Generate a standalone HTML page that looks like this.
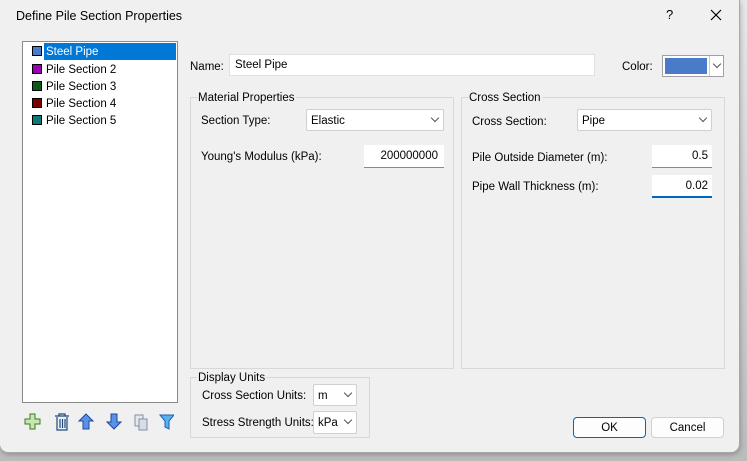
<!DOCTYPE html>
<html><head><meta charset="utf-8"><style>
*{box-sizing:border-box;margin:0;padding:0}
body{width:747px;height:461px;background:linear-gradient(#e8e8e8,#bcbcbc);position:relative;overflow:hidden;font-family:"Liberation Sans",sans-serif;font-size:11.5px;color:#000}
.dlg{position:absolute;left:0;top:0;width:739px;height:452px;background:#f0f0f0;border-radius:0 0 8px 8px;box-shadow:0 0 0 1px #a8a8a8,1px 2px 6px rgba(0,0,0,.3)}
.a{position:absolute}
.t{position:absolute;white-space:nowrap;line-height:16px}
.in{position:absolute;background:#fff;border-bottom:1px solid #8a8a8a}
.cb{position:absolute;background:#fff;border:1px solid #d0d0d0;border-radius:2px}
.cb span{position:absolute;left:4px;top:3px;line-height:16px}
.cb i{position:absolute;right:5px;top:5px;width:6px;height:6px;border-right:1px solid #555;border-bottom:1px solid #555;transform:rotate(45deg)}
.grp{position:absolute;border:1px solid #d8d8d8}
.lg{position:absolute;background:#f0f0f0;padding:0 1px;top:-7px;left:6px;line-height:14px}
.sw{position:absolute;left:9px;width:10px;height:10px;border:1px solid #000}
.btn{position:absolute;background:#fdfdfd;border:1px solid #d0d0d0;border-radius:4px;text-align:center;line-height:20px}
</style></head><body>
<div class="dlg">
<div class="t" style="left:16px;top:8px;font-size:12.5px">Define Pile Section Properties</div>
<div class="t" style="left:666px;top:7px;font-size:13px">?</div>
<svg class="a" style="left:710px;top:9px" width="12" height="12"><path d="M1 1L11 11M11 1L1 11" stroke="#000" stroke-width="1.2"/></svg>

<div class="a" style="left:22px;top:41px;width:156px;height:362px;background:#fff;border:1px solid #8a8a8a">
<div class="a" style="left:21px;top:1px;width:132px;height:17px;background:#0078d7"></div>
<div class="sw" style="top:4px;background:#4a7bc8"></div><div class="t" style="left:23px;top:2px;color:#fff">Steel Pipe</div>
<div class="sw" style="top:22px;background:#9b00b0"></div><div class="t" style="left:23px;top:20px">Pile Section 2</div>
<div class="sw" style="top:39px;background:#0b5a1a"></div><div class="t" style="left:23px;top:37px">Pile Section 3</div>
<div class="sw" style="top:56px;background:#7a0000"></div><div class="t" style="left:23px;top:54px">Pile Section 4</div>
<div class="sw" style="top:73px;background:#0b7a75"></div><div class="t" style="left:23px;top:71px">Pile Section 5</div>
</div>

<svg class="a" style="left:24px;top:413px" width="150" height="18">
<path d="M6 1h5v5h5v5h-5v5H6v-5H1V6h5z" fill="#c8e6b0" stroke="#3a7a20"/>
<path d="M31 3h14M35 3V1h6v2M33 4v13h10V4M36 6v9M38.5 6v9M41 6v9" fill="none" stroke="#1a4a80" stroke-width="1.2"/>
<path d="M62 1l7 7h-4v8h-6V8h-4z" fill="#5a90e8" stroke="#1a4aa0"/>
<path d="M87 1h6v8h4l-7 7-7-7h4z" fill="#5a90e8" stroke="#1a4aa0"/>
<path d="M111 2h8v11h-8z" fill="#e8e8e8" stroke="#8090a8"/><path d="M115 6h8v11h-8z" fill="#d8dde8" stroke="#8090a8"/>
<path d="M136 2h14l-5 6v8l-4 -2V8z" fill="#5ab0f0" stroke="#1a60b0"/>
</svg>

<div class="t" style="left:190px;top:59px">Name:</div>
<div class="in" style="left:229px;top:54px;width:366px;height:22px;border:1px solid #e0e0e0"><span class="t" style="left:5px;top:2px">Steel Pipe</span></div>
<div class="t" style="left:622px;top:59px">Color:</div>
<div class="a" style="left:662px;top:55px;width:62px;height:22px;background:#fff;border:1px solid #a0a0a0">
<div class="a" style="left:2px;top:2px;width:42px;height:16px;background:#4a7bc8"></div>
<div class="a" style="left:46px;top:0;width:1px;height:20px;background:#ccc"></div>
<i class="a" style="left:51px;top:5px;width:6px;height:6px;border-right:1px solid #555;border-bottom:1px solid #555;transform:rotate(45deg)"></i>
</div>

<div class="grp" style="left:190px;top:97px;width:264px;height:272px"><div class="lg">Material Properties</div></div>
<div class="t" style="left:201px;top:113px">Section Type:</div>
<div class="cb" style="left:306px;top:109px;width:138px;height:22px"><span>Elastic</span><i></i></div>
<div class="t" style="left:201px;top:149px">Young's Modulus (kPa):</div>
<div class="in" style="left:364px;top:145px;width:80px;height:23px"><span class="t" style="right:6px;top:3px">200000000</span></div>

<div class="grp" style="left:461px;top:97px;width:264px;height:272px"><div class="lg">Cross Section</div></div>
<div class="t" style="left:472px;top:114px">Cross Section:</div>
<div class="cb" style="left:577px;top:109px;width:135px;height:22px"><span>Pipe</span><i></i></div>
<div class="t" style="left:472px;top:150px">Pile Outside Diameter (m):</div>
<div class="in" style="left:652px;top:145px;width:60px;height:23px"><span class="t" style="right:4px;top:3px">0.5</span></div>
<div class="t" style="left:472px;top:179px">Pipe Wall Thickness (m):</div>
<div class="in" style="left:652px;top:175px;width:60px;height:23px;border-bottom:2px solid #0067c0"><span class="t" style="right:4px;top:3px">0.02</span></div>

<div class="grp" style="left:190px;top:377px;width:180px;height:61px"><div class="lg">Display Units</div></div>
<div class="t" style="left:202px;top:388px">Cross Section Units:</div>
<div class="cb" style="left:313px;top:384px;width:44px;height:22px"><span>m</span><i></i></div>
<div class="t" style="left:202px;top:415px">Stress Strength Units:</div>
<div class="cb" style="left:313px;top:411px;width:44px;height:23px"><span>kPa</span><i></i></div>

<div class="btn" style="left:573px;top:417px;width:73px;height:21px;border:1px solid #0067c0">OK</div>
<div class="btn" style="left:651px;top:417px;width:73px;height:21px">Cancel</div>
</div>
</body></html>
